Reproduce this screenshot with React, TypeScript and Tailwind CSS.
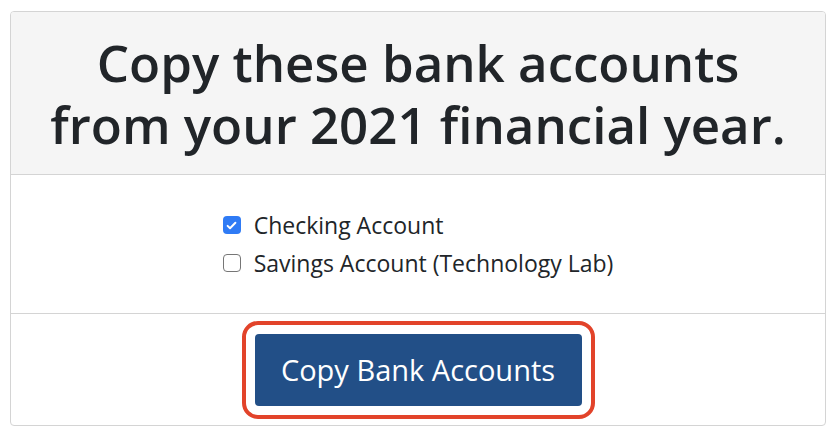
import { useState } from "react"

type Account = {
  id: string
  label: string
}

const accounts: Account[] = [
  { id: "checking", label: "Checking Account" },
  { id: "savings", label: "Savings Account (Technology Lab)" },
]

function CheckBox({ checked }: { checked: boolean }) {
  if (checked) {
    return (
      <span className="flex h-[18px] w-[18px] shrink-0 items-center justify-center rounded-[4px] bg-[#2f7bf5]">
        <svg viewBox="0 0 16 16" className="h-[13px] w-[13px]" fill="none">
          <path d="M3.2 8.4l3 3 6.6-6.8" stroke="#fff" strokeWidth="2.4" strokeLinecap="round" strokeLinejoin="round" />
        </svg>
      </span>
    )
  }
  return <span className="h-[18px] w-[18px] shrink-0 rounded-[4px] border-[1.5px] border-[#767676] bg-white" />
}

export default function App() {
  const [selected, setSelected] = useState<Record<string, boolean>>({ checking: true, savings: false })

  function toggle(id: string) {
    setSelected((prev) => ({ ...prev, [id]: !prev[id] }))
  }

  return (
    <div className="min-h-[438px] bg-white px-[10px] pt-[11px] text-[#212529]" style={{ fontFamily: '"Open Sans", "Liberation Sans", sans-serif' }}>
      <div className="w-[816px] overflow-hidden rounded-[4px] border border-[#d4d4d4]">
        <div className="h-[163px] border-b border-[#d4d4d4] bg-[#f5f5f5] pt-[19px] text-center">
          <h1 className="text-[51px] font-semibold leading-[62px]">
            Copy these bank accounts
            <br />
            from your 2021 financial year.
          </h1>
        </div>

        <div className="flex h-[139px] items-center justify-center border-b border-[#d4d4d4]">
          <div className="flex flex-col gap-[8px]">
            {accounts.map((account) => (
              <label
                key={account.id}
                className="flex h-[30px] cursor-pointer items-center gap-[13px] text-[23px] leading-[30px]"
                onClick={() => toggle(account.id)}
              >
                <CheckBox checked={!!selected[account.id]} />
                <span>{account.label}</span>
              </label>
            ))}
          </div>
        </div>

        <div className="flex h-[111px] items-center justify-center">
          <div className="rounded-[16px] border-4 border-[#e2432a] p-[9px]">
            <button
              type="button"
              className="flex h-[72px] w-[327px] items-center justify-center rounded-[4px] bg-[#224f87] text-[29px] text-white"
            >
              Copy Bank Accounts
            </button>
          </div>
        </div>
      </div>
    </div>
  )
}
